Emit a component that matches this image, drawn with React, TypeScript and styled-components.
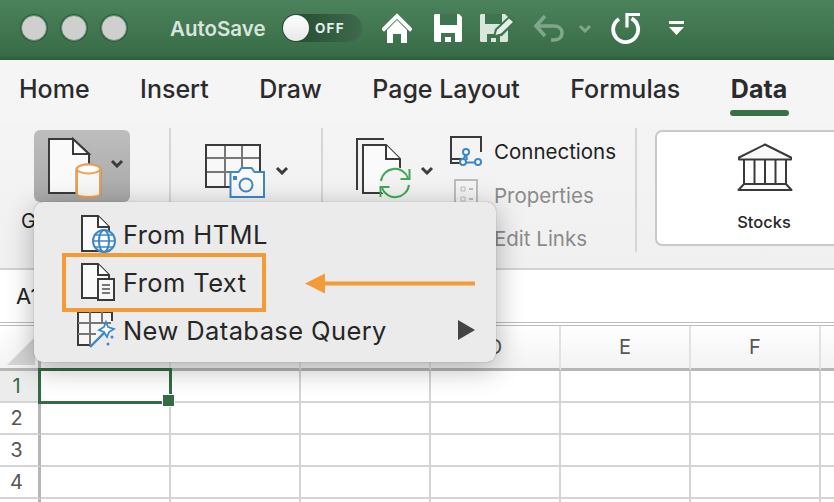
import React from "react";
import styled, { createGlobalStyle } from "styled-components";

const Global = createGlobalStyle`
  html, body { margin: 0; padding: 0; background: #fff; }
  body { font-family: Inter, "Liberation Sans", sans-serif; }
  * { box-sizing: border-box; }
`;

const Page = styled.div`
  position: relative;
  width: 834px;
  height: 502px;
  overflow: hidden;
  background: #fff;
  color: #2a2a2a;
`;

/* ---------- title bar ---------- */
const TitleBar = styled.header`
  height: 60px;
  display: flex;
  align-items: center;
  padding: 0 0 4px 21px;
  background: linear-gradient(#4c825b, #376c47 92%, #2e5c3c);
`;
const Lights = styled.div`
  display: flex;
  gap: 14px;
  margin-right: 43px;
`;
const Light = styled.span`
  width: 26px;
  height: 26px;
  border-radius: 50%;
  background: #cfcfcf;
  border: 1px solid #5f8a6c;
  box-shadow: 0 0 0 1px #2f5f3e;
`;
const AutoSave = styled.span`
  font-size: 20.5px;
  font-weight: 600;
  color: #d8e5dc;
  margin-right: 12px;
  width: 100px;
  white-space: nowrap;
`;
const Toggle = styled.div`
  width: 80px;
  height: 28px;
  border-radius: 14px;
  background: linear-gradient(90deg, #21472e, #3e6a4c);
  display: flex;
  align-items: center;
  padding-left: 1px;
  gap: 6px;
  margin-right: 20px;
`;
const Knob = styled.span`
  width: 26px;
  height: 26px;
  border-radius: 50%;
  background: linear-gradient(#fff, #e8e8e8);
`;
const ToggleText = styled.span`
  font-size: 13.5px;
  font-weight: 700;
  letter-spacing: 1.2px;
  color: #e4ede7;
`;
const Icon = styled.svg<{ $ml?: number; $mt?: number }>`
  display: block;
  flex: none;
  margin-left: ${(p) => p.$ml ?? 0}px;
  margin-top: ${(p) => p.$mt ?? 0}px;
`;

/* ---------- tabs ---------- */
const Tabs = styled.nav`
  height: 65px;
  display: flex;
  gap: 50.5px;
  padding: 14px 0 0 19px;
  background: #f5f5f5;
`;
const Tab = styled.div<{ $active?: boolean }>`
  position: relative;
  font-size: 25px;
  line-height: 30px;
  font-weight: ${(p) => (p.$active ? 700 : 500)};
  color: #2b2b2b;
  white-space: nowrap;
  ${(p) =>
    p.$active &&
    `&::after{content:"";position:absolute;left:-1px;right:-2px;top:36px;height:6px;border-radius:3px;background:#3a7049;}`}
`;

/* ---------- ribbon ---------- */
const Ribbon = styled.section`
  height: 145px;
  display: flex;
  align-items: flex-start;
  padding: 3px 0 0 34px;
  background: linear-gradient(#f4f4f4, #f0f0f0);
  border-bottom: 2px solid #d2d2d2;
`;
const GroupColumn = styled.div`
  width: 96px;
  flex: none;
  margin-top: 2px;
`;
const DataButton = styled.div`
  width: 96px;
  height: 72px;
  border-radius: 6px;
  background: linear-gradient(#bdbdbd, #a9a9a9);
  display: flex;
  align-items: flex-start;
`;
const GroupLabel = styled.div`
  margin: 7px 0 0 -13px;
  font-size: 20px;
  line-height: 24px;
  white-space: nowrap;
  color: #1f1f1f;
`;
const Separator = styled.div<{ $ml: number }>`
  width: 2px;
  height: 124px;
  flex: none;
  background: #d6d6d6;
  margin-left: ${(p) => p.$ml}px;
`;
const ConnList = styled.div`
  display: flex;
  flex-direction: column;
  margin-left: 16px;
  width: 186px;
  flex: none;
`;
const ConnRow = styled.div<{ $muted?: boolean; $h: number }>`
  height: ${(p) => p.$h}px;
  display: flex;
  align-items: center;
  font-size: 20.5px;
  font-weight: 400;
  white-space: nowrap;
  color: ${(p) => (p.$muted ? "#8b8b8b" : "#1f1f1f")};
`;
const ConnIcon = styled.span`
  width: 44px;
  flex: none;
  display: flex;
`;
const StockCard = styled.div`
  margin: 2px 0 0 18px;
  width: 220px;
  height: 116px;
  flex: none;
  background: #fff;
  border: 2px solid #c9c9c9;
  border-radius: 7px;
  display: flex;
  flex-direction: column;
  align-items: flex-start;
  padding: 10px 0 0 80px;
`;
const StockLabel = styled.div`
  width: 54px;
  text-align: center;
  font-size: 16.5px;
  font-weight: 500;
  line-height: 20px;
  margin-top: 20px;
  color: #262626;
`;

/* ---------- formula bar ---------- */
const FormulaBar = styled.div`
  height: 56px;
  padding: 0 0 0 16px;
  display: flex;
  align-items: center;
  font-size: 22px;
  color: #222;
  background: #fff;
  border-bottom: 4px double #bcbcbc;
`;

/* ---------- sheet ---------- */
const Sheet = styled.div`
  display: grid;
  grid-template-columns: 41px repeat(7, 130px);
  grid-template-rows: 45px repeat(5, 32px);
`;
const Corner = styled.div`
  position: relative;
  background: linear-gradient(#fff, #f3f3f3);
  border-right: 3px solid #b6b6b6;
  border-bottom: 3px solid #b6b6b6;
  &::after {
    content: "";
    position: absolute;
    right: 3px;
    bottom: 3px;
    border-style: solid;
    border-width: 0 0 28px 28px;
    border-color: transparent transparent #d5d5d5 transparent;
  }
`;
const ColHead = styled.div`
  display: flex;
  align-items: center;
  justify-content: center;
  font-size: 20px;
  color: #555;
  background: linear-gradient(#fff, #f3f3f3);
  border-right: 2px solid #e2e2e2;
  border-bottom: 3px solid #b6b6b6;
`;
const RowHead = styled.div<{ $active?: boolean }>`
  display: flex;
  align-items: center;
  justify-content: center;
  padding-right: 5px;
  font-size: 20px;
  color: ${(p) => (p.$active ? "#336b44" : "#555")};
  background: ${(p) => (p.$active ? "#ececec" : "#fff")};
  border-right: 3px solid #b6b6b6;
  border-bottom: 2px solid #d4d4d4;
`;
const Cell = styled.div`
  position: relative;
  background: #fff;
  border-right: 2px solid #d4d4d4;
  border-bottom: 2px solid #d4d4d4;
`;
const Selection = styled.div`
  position: absolute;
  z-index: 2;
  left: -3px;
  top: -3px;
  width: 134px;
  height: 36px;
  border: 3.5px solid #336b44;
  &::after {
    content: "";
    position: absolute;
    right: -6px;
    bottom: -6px;
    width: 11px;
    height: 11px;
    background: #336b44;
    border: 1px solid #fff;
  }
`;

/* ---------- dropdown + annotation ---------- */
const Menu = styled.div`
  position: absolute;
  z-index: 5;
  left: 34px;
  top: 202px;
  width: 462px;
  height: 160px;
  padding-top: 8px;
  background: #ebebeb;
  border-radius: 9px;
  box-shadow: 0 0 1px rgba(0, 0, 0, 0.45), 0 6px 28px rgba(0, 0, 0, 0.3);
`;
const MenuItem = styled.div`
  height: 48px;
  display: flex;
  align-items: center;
  padding: 0 21px 0 40px;
  font-size: 25.5px;
  letter-spacing: 0.4px;
  color: #262626;
  white-space: nowrap;
`;
const MenuIcon = styled.span`
  width: 49px;
  flex: none;
  display: flex;
`;
const SubArrow = styled.span`
  margin-left: auto;
  width: 0;
  height: 0;
  border-style: solid;
  border-width: 10px 0 10px 17px;
  border-color: transparent transparent transparent #444;
`;
const Highlight = styled.div`
  position: absolute;
  z-index: 6;
  left: 62px;
  top: 253px;
  width: 204px;
  height: 59px;
  border: 4px solid #f49b37;
`;
const Arrow = styled.svg`
  position: absolute;
  z-index: 6;
  left: 300px;
  top: 268px;
`;

const Chevron = ({ ml, mt, color = "#3c3c3c" }: { ml: number; mt: number; color?: string }) => (
  <Icon $ml={ml} $mt={mt} width="14" height="9" viewBox="0 0 14 9">
    <path d="M2 2l5 5 5-5" fill="none" stroke={color} strokeWidth="3" />
  </Icon>
);

const DARK = "#3a3a3a";
const BLUE = "#3d87c6";
const TitleIcons = () => (
  <>
    <Icon width="30" height="32" viewBox="390 11 30 32">
      <path d="M392 28 405 15l13 13" fill="none" stroke="#fff" strokeWidth="4" strokeLinecap="square" />
      <path d="M395 29l10-10 10 10v13h-6v-9h-8v9h-6z" fill="#fff" />
    </Icon>
    <Icon $ml={22} width="28" height="28" viewBox="442 14 28 28">
      <path d="M443 14h24l3 3v24l-1 1h-26l-1-1V15z" fill="#fff" />
      <rect x="448" y="14" width="17" height="11" fill="#3f7450" />
      <path d="M449 42v-9h14v9h-4v-5h-6v5z" fill="#3f7450" />
    </Icon>
    <Icon $ml={18} width="36" height="30" viewBox="488 13 36 30">
      <path d="M489 14h24l3 3v24l-1 1h-26l-1-1V15z" fill="#d9e6dc" />
      <rect x="493" y="14" width="17" height="10" fill="#3f7450" />
      <path d="M495 42v-8h13v8h-4v-4h-5v4z" fill="#3f7450" />
      <path d="M501 37l2-8 14-13 7 6-14 14z" fill="#3f7450" />
      <path d="M503.500 35l1.500-5 12-11.500 4 3.500-12 11.500z" fill="#e6efe9" />
    </Icon>
    <Icon $ml={17} width="32" height="30" viewBox="541 13 32 30">
      <path d="M553 16l-9 10 9 10M544 26h18c5 0 8 3 8 7s-3 7-8 7h-3" fill="none" stroke="#80a78b" strokeWidth="3.600" />
    </Icon>
    <Chevron ml={13} mt={0} color="#80a78b" />
    <Icon $ml={17} width="32" height="32" viewBox="615 13 32 32">
      <path d="M625 20a12.500 12.500 0 1 0 12.500-.500" fill="none" stroke="#fff" strokeWidth="3.800" />
      <path d="M646 15.500h-13v13" fill="none" stroke="#fff" strokeWidth="3.200" />
    </Icon>
    <Icon $ml={28} width="16" height="16" viewBox="675 22 16 16">
      <rect x="675" y="23" width="15" height="3" fill="#fff" />
      <path d="M675 29h15l-7.500 8z" fill="#fff" />
    </Icon>
  </>
);

export default function App() {
  const cols = ["A", "B", "C", "D", "E", "F", "G"];
  const rows = [1, 2, 3, 4, 5];
  return (
    <Page>
      <Global />
      <TitleBar>
        <Lights>
          <Light />
          <Light />
          <Light />
        </Lights>
        <AutoSave>AutoSave</AutoSave>
        <Toggle>
          <Knob />
          <ToggleText>OFF</ToggleText>
        </Toggle>
        <TitleIcons />
      </TitleBar>

      <Tabs>
        <Tab>Home</Tab>
        <Tab>Insert</Tab>
        <Tab>Draw</Tab>
        <Tab>Page Layout</Tab>
        <Tab>Formulas</Tab>
        <Tab $active>Data</Tab>
      </Tabs>

      <Ribbon>
        <GroupColumn>
          <DataButton>
            <Icon $ml={12} $mt={6} width="60" height="64" viewBox="46 136 60 64">
              <path d="M49 139h24l16 15v39H49z" fill="#fafafa" stroke={DARK} strokeWidth="2" />
              <path d="M73 139v15h16z" fill="#fff" stroke={DARK} strokeWidth="2" />
              <path d="M75 170c0-9 27-9 27 0v25c0 4-27 4-27 0z" fill="#9c9c9c" opacity="0.7" />
              <path d="M77 170v24c0 4 23 4 23 0v-24" fill="#f7f7f7" stroke="#ee9f4f" strokeWidth="2" />
              <ellipse cx="88.500" cy="169" rx="11.500" ry="4.500" fill="#fff" stroke="#ee9f4f" strokeWidth="2" />
            </Icon>
            <Chevron ml={4} mt={29} />
          </DataButton>
          <GroupLabel>Get External Data</GroupLabel>
        </GroupColumn>
        <Separator $ml={39} />
        <Icon $ml={33} $mt={14} width="62" height="58" viewBox="203 142 62 58">
          <rect x="205" y="145" width="54" height="42" fill="#f8f8f8" stroke={DARK} strokeWidth="2" />
          <path d="M224 146v40M241 146v40M206 158h52M206 172h52" stroke="#777" strokeWidth="2" />
          <path d="M229.500 172h8l3-4h10l3 4h9.500v25h-33.500z" fill="#fafafa" stroke={BLUE} strokeWidth="2" />
          <circle cx="245" cy="185" r="6.500" fill="none" stroke={BLUE} strokeWidth="2" />
          <rect x="232" y="176" width="4" height="4" fill={BLUE} />
        </Icon>
        <Chevron ml={9} mt={38} />
        <Separator $ml={32} />
        <Icon $ml={32} $mt={9} width="56" height="62" viewBox="353 137 56 62">
          <path d="M382 139h-27v51" fill="none" stroke={DARK} strokeWidth="2" />
          <path d="M361 145h23l14 14v34h-37z" fill="#fafafa" stroke={DARK} strokeWidth="2" />
          <path d="M384 145v14h14" fill="#fff" stroke={DARK} strokeWidth="2" />
          <circle cx="393" cy="183" r="16" fill="#f2f2f2" />
          <path d="M379 181a14 14 0 0 1 27-3M407 185a14 14 0 0 1-27 3" fill="none" stroke="#3fa757" strokeWidth="2" />
          <path d="M407.500 169v10h-9M378.500 197v-10h9" fill="none" stroke="#3fa757" strokeWidth="2" />
        </Icon>
        <Chevron ml={9} mt={38} />
        <ConnList>
          <ConnRow $h={46}>
            <ConnIcon>
              <Icon width="33" height="30" viewBox="446 136 33 30">
                <path d="M461 163h-14v-26h30v15M447 159h14" fill="none" stroke={DARK} strokeWidth="2" />
                <path d="M462 154l-3 6M462 154l1 6M461 162.500h11" stroke={BLUE} strokeWidth="2" />
                <circle cx="462" cy="152" r="3" fill="#fff" stroke={BLUE} strokeWidth="2" />
                <circle cx="459" cy="162" r="3" fill="#fff" stroke={BLUE} strokeWidth="2" />
                <circle cx="474" cy="162" r="3" fill="#fff" stroke={BLUE} strokeWidth="2" />
              </Icon>
            </ConnIcon>
            Connections
          </ConnRow>
          <ConnRow $h={42} $muted>
            <ConnIcon>
              <Icon $ml={4} width="24" height="32" viewBox="450 178 24 32">
                <rect x="451" y="179" width="22" height="30" fill="#f4f4f4" stroke="#bdbdbd" strokeWidth="2" />
                <path d="M457 186h4v4h-4zM457 196h4v4h-4z" fill="none" stroke="#bdbdbd" />
                <path d="M465 188h4M465 198h4" stroke="#bdbdbd" strokeWidth="2" />
              </Icon>
            </ConnIcon>
            Properties
          </ConnRow>
          <ConnRow $h={44} $muted>
            <ConnIcon />
            Edit Links
          </ConnRow>
        </ConnList>
        <Separator $ml={-1} />
        <StockCard>
          <Icon width="56" height="50" viewBox="752 141 56 50">
            <path d="M780 143.500l-26 13v2h52v-2z" fill="#fafafa" stroke={DARK} strokeWidth="2" strokeLinejoin="round" />
            <path d="M759 158v25M769.500 158v25M780 158v25M790.500 158v25M801 158v25" stroke={DARK} strokeWidth="2" />
            <path d="M759 183h42l5.500 6h-53z" fill="#fafafa" stroke={DARK} strokeWidth="2" strokeLinejoin="round" />
          </Icon>
          <StockLabel>Stocks</StockLabel>
        </StockCard>
      </Ribbon>

      <FormulaBar>A1</FormulaBar>

      <Sheet>
        <Corner />
        {cols.map((c) => (
          <ColHead key={c}>{c}</ColHead>
        ))}
        {rows.map((r) => (
          <React.Fragment key={r}>
            <RowHead $active={r === 1}>{r}</RowHead>
            {cols.map((c) => (
              <Cell key={c}>{r === 1 && c === "A" && <Selection />}</Cell>
            ))}
          </React.Fragment>
        ))}
      </Sheet>

      <Menu>
        <MenuItem>
          <MenuIcon>
            <Icon $ml={6} width="36" height="38" viewBox="79 213 36 38">
              <path d="M81 214h16l11 11v24H81z" fill="#fafafa" stroke={DARK} strokeWidth="2" />
              <path d="M97 214v11h11" fill="#fff" stroke={DARK} strokeWidth="2" />
              <circle cx="103" cy="239" r="11" fill="#fff" stroke={BLUE} strokeWidth="2" />
              <ellipse cx="103" cy="239" rx="5" ry="11" fill="none" stroke={BLUE} strokeWidth="2" />
              <path d="M92 239h22M94 233h18M94 245h18" stroke={BLUE} strokeWidth="1.600" />
            </Icon>
          </MenuIcon>
          From HTML
        </MenuItem>
        <MenuItem>
          <MenuIcon>
            <Icon $ml={6} width="36" height="40" viewBox="79 261 36 40">
              <path d="M81 263h16l11 11v23H81z" fill="#fafafa" stroke={DARK} strokeWidth="2" />
              <path d="M97 263v11h11" fill="#fff" stroke={DARK} strokeWidth="2" />
              <rect x="97" y="278" width="16" height="21" fill="#f6f6f6" stroke={DARK} strokeWidth="2" />
              <path d="M101 284h8M101 288h8M101 292h8" stroke="#777" strokeWidth="2" />
            </Icon>
          </MenuIcon>
          From Text
        </MenuItem>
        <MenuItem>
          <MenuIcon>
            <Icon $ml={2} width="40" height="38" viewBox="75 312 40 38">
              <path d="M90 346H77v-33h34v9" fill="#f6f6f6" stroke={DARK} strokeWidth="2" />
              <path d="M89 313v33M101 313v12M77 324h33M77 335h18" stroke="#777" strokeWidth="2" />
              <path d="M89 348l14-14" stroke={BLUE} strokeWidth="2.400" />
              <path d="M105 323l2 5 6 2-5 3-2 5-3-5-5-2 5-3z" fill="#fff" stroke={BLUE} strokeWidth="1.800" />
              <circle cx="111" cy="338" r="1.500" fill={BLUE} />
              <circle cx="107" cy="345" r="1.500" fill={BLUE} />
            </Icon>
          </MenuIcon>
          New Database Query
          <SubArrow />
        </MenuItem>
      </Menu>
      <Highlight />
      <Arrow width="180" height="30" viewBox="300 268 180 30">
        <path d="M325 281.500h150v4H325z" fill="#f49b37" />
        <path d="M305 283.500l20-10v20z" fill="#f49b37" />
      </Arrow>
    </Page>
  );
}
